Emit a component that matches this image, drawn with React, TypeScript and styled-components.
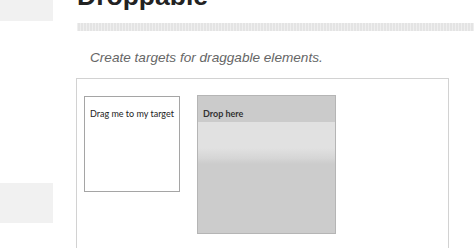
import styled, { createGlobalStyle } from "styled-components";

const GlobalStyle = createGlobalStyle`
  html, body {
    margin: 0;
    padding: 0;
    background: #fff;
    overflow: hidden;
  }
  body {
    font-family: "Liberation Sans", Arial, sans-serif;
  }
`;

const Page = styled.div`
  display: flex;
  width: 474px;
  height: 248px;
  overflow: hidden;
`;

const Sidebar = styled.div`
  width: 53px;
  flex: none;
  display: flex;
  flex-direction: column;
`;

const SideBlock = styled.div<{ $top: number; $height: number }>`
  margin-top: ${(p) => p.$top}px;
  height: ${(p) => p.$height}px;
  background: #f1f1f1;
`;

const Main = styled.div`
  margin-left: 23px;
  flex: 1;
  min-width: 0;
  display: flex;
  flex-direction: column;
`;

const Title = styled.h1`
  margin: -17px 0 0 1px;
  height: 27px;
  font-family: "Liberation Sans", Arial, sans-serif;
  font-weight: 700;
  font-size: 26.5px;
  line-height: 27px;
  color: #222;
  white-space: nowrap;
`;

const Rule = styled.div`
  margin-top: 13px;
  margin-left: 1px;
  height: 10px;
  background-color: #e4e4e4;
  background-image: repeating-linear-gradient(
    90deg,
    rgba(255, 255, 255, 0.4) 0 1px,
    transparent 1px 3px
  );
`;

const Lead = styled.p`
  margin: 19px 0 0 14px;
  font-family: "Liberation Sans", Arial, sans-serif;
  font-style: italic;
  font-size: 13.6px;
  line-height: 16px;
  color: #666;
`;

const Demo = styled.div`
  margin-top: 12px;
  width: 373px;
  height: 200px;
  border: 1px solid #d2d2d2;
  border-bottom: none;
  display: flex;
  align-items: flex-start;
  gap: 17px;
  padding: 16px 0 0 7px;
  box-sizing: border-box;
`;

const Draggable = styled.div`
  width: 96px;
  height: 96px;
  margin-top: 1px;
  box-sizing: border-box;
  border: 1px solid #a5a5a5;
  background: #fff;
  padding: 11px 0 0 5px;
  font-family: Lato, "Open Sans", sans-serif;
  font-size: 9px;
  color: #222;
`;

const Droppable = styled.div`
  width: 139px;
  height: 139px;
  box-sizing: border-box;
  border: 1px solid #b5b5b5;
  background: linear-gradient(
    to bottom,
    #e1e1e1 0px,
    #e1e1e1 52px,
    #d6d6d6 62px,
    #cccccc 68px,
    #cccccc 100%
  );
  display: flex;
  flex-direction: column;
`;

const DropHeader = styled.p`
  margin: 0;
  height: 26px;
  background: #cbcbcb;
  padding: 12px 0 0 5px;
  box-sizing: border-box;
  font-family: Lato, "Open Sans", sans-serif;
  font-weight: 700;
  font-size: 9px;
  color: #333;
`;

export default function App() {
  return (
    <>
      <GlobalStyle />
      <Page>
        <Sidebar>
          <SideBlock $top={0} $height={21} />
          <SideBlock $top={162} $height={40} />
        </Sidebar>
        <Main>
          <Title>Droppable</Title>
          <Rule />
          <Lead>Create targets for draggable elements.</Lead>
          <Demo>
            <Draggable>Drag me to my target</Draggable>
            <Droppable>
              <DropHeader>Drop here</DropHeader>
            </Droppable>
          </Demo>
        </Main>
      </Page>
    </>
  );
}
